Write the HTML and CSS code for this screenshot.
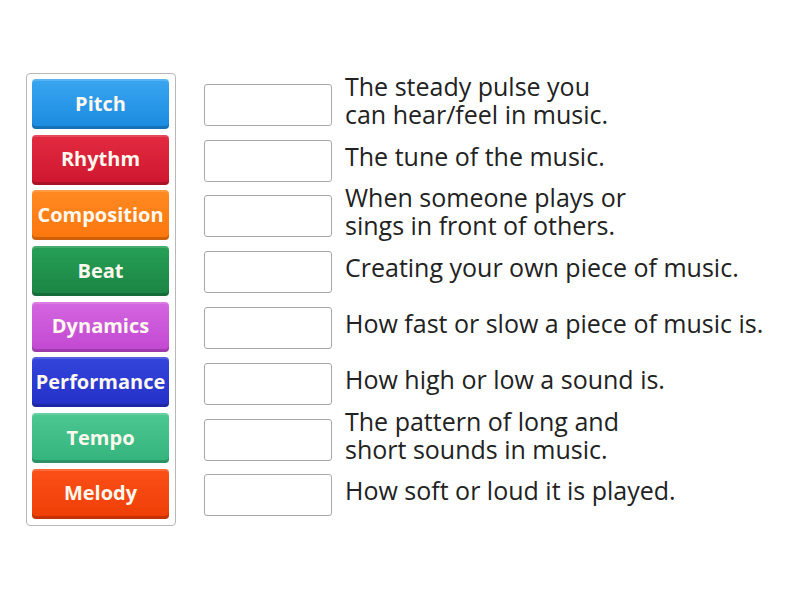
FILE: index.html
```html
<!DOCTYPE html>
<html>
<head>
<meta charset="utf-8">
<link rel="stylesheet" href="styles.css">
</head>
<body>
<div class="page">
  <div class="bank">
    <div class="tile pitch">Pitch</div>
    <div class="tile rhythm">Rhythm</div>
    <div class="tile composition">Composition</div>
    <div class="tile beat">Beat</div>
    <div class="tile dynamics">Dynamics</div>
    <div class="tile performance">Performance</div>
    <div class="tile tempo">Tempo</div>
    <div class="tile melody">Melody</div>
  </div>
  <div class="answers">
    <div class="row"><div class="slot"></div><div class="def">The steady pulse you<br>can hear/feel in music.</div></div>
    <div class="row"><div class="slot"></div><div class="def">The tune of the music.</div></div>
    <div class="row"><div class="slot"></div><div class="def">When someone plays or<br>sings in front of others.</div></div>
    <div class="row"><div class="slot"></div><div class="def">Creating your own piece of music.</div></div>
    <div class="row"><div class="slot"></div><div class="def">How fast or slow a piece of music is.</div></div>
    <div class="row"><div class="slot"></div><div class="def">How high or low a sound is.</div></div>
    <div class="row"><div class="slot"></div><div class="def">The pattern of long and<br>short sounds in music.</div></div>
    <div class="row"><div class="slot"></div><div class="def">How soft or loud it is played.</div></div>
  </div>
</div>
</body>
</html>
```
FILE: styles.css
```css
html, body {
  margin: 0;
  padding: 0;
  background: #fff;
}
.page {
  display: flex;
  align-items: flex-start;
  padding: 73px 0 0 26px;
  font-family: "Open Sans", "Liberation Sans", sans-serif;
}
.bank {
  width: 137px;
  border: 1px solid #b8b8b8;
  border-radius: 4px;
  padding: 5px 6px 6px 5px;
  display: flex;
  flex-direction: column;
  gap: 5.7px;
}
.tile {
  height: 50px;
  border-radius: 4px;
  color: #fff8ee;
  font-weight: 700;
  font-size: 20px;
  padding-bottom: 2px;
  box-sizing: border-box;
  display: flex;
  align-items: center;
  justify-content: center;
  box-shadow: inset 0 -3px 0 rgba(0,0,0,0.18), inset 0 2px 0 rgba(255,255,255,0.15);
}
.pitch { background: linear-gradient(#3aa6f0, #1a8ae0); }
.rhythm { background: linear-gradient(#e22a40, #cf1630); }
.composition { background: linear-gradient(#ff8a22, #fb760c); }
.beat { background: linear-gradient(#26a055, #1b8444); }
.dynamics { background: linear-gradient(#d466e0, #c148d2); }
.performance { background: linear-gradient(#3345dc, #2430c8); }
.tempo { background: linear-gradient(#4cc892, #33b37c); }
.melody { background: linear-gradient(#fb5018, #ee3e06); }
.answers {
  margin-left: 28px;
  padding-top: 4px;
  display: flex;
  flex-direction: column;
}
.row {
  height: 55.8px;
  display: flex;
  align-items: center;
}
.slot {
  width: 126px;
  height: 40px;
  border: 1px solid #a8a8a8;
  border-radius: 3px;
  flex: none;
}
.def {
  margin-left: 13px;
  font-size: 25px;
  line-height: 28px;
  color: #222;
  margin-top: -10px;
  white-space: nowrap;
}
```
